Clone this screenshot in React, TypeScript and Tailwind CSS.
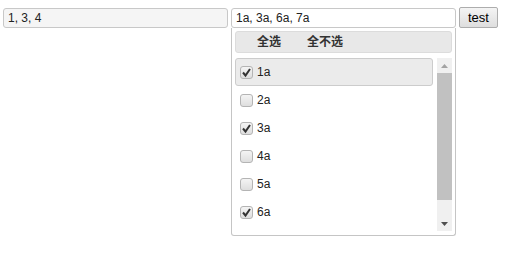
import React from "react";

const items = [
  { label: "1a", checked: true },
  { label: "2a", checked: false },
  { label: "3a", checked: true },
  { label: "4a", checked: false },
  { label: "5a", checked: false },
  { label: "6a", checked: true },
];

function Box({ checked }: { checked: boolean }) {
  return (
    <span className="relative inline-block w-[13px] h-[13px] rounded-[3px] border border-[#b4b4b4] bg-gradient-to-b from-[#f4f4f4] to-[#dedede] shrink-0">
      {checked && (
        <svg viewBox="0 0 13 13" className="absolute left-[-1px] top-[-1px] w-[13px] h-[13px]">
          <path d="M3 6.5 L5.5 9.5 L10 3" fill="none" stroke="#333" strokeWidth="2" />
        </svg>
      )}
    </span>
  );
}

export default function App() {
  return (
    <div
      className="w-[519px] h-[260px] bg-white flex items-start gap-[3px] pt-[7px] pl-[3px] text-[12px] text-[#222]"
      style={{ fontFamily: '"Liberation Sans", Arial, "Noto Sans CJK SC", sans-serif' }}
    >
      <div className="w-[225px] h-[20px] mt-[1px] border border-[#c8c8c8] rounded-[3px] bg-[#f5f5f5] flex items-center px-[4px]">
        1, 3, 4
      </div>
      <div className="flex flex-col w-[225px]">
        <div className="h-[20px] mt-[1px] border border-[#c8c8c8] rounded-[3px] bg-white flex items-center px-[4px]">
          1a, 3a, 6a, 7a
        </div>
        <div className="h-[208px] border border-[#c5c5c5] border-t-0 rounded-b-[3px] pt-[3px] px-[3px] pb-[3px] bg-white flex flex-col">
          <div className="h-[22px] rounded-[3px] bg-[#e8e8e8] border border-[#dcdcdc] flex items-center pl-[21px] gap-[26px] font-bold text-[#333]">
            <span>全选</span>
            <span>全不选</span>
          </div>
          <div className="flex mt-[5px] h-[173px] overflow-hidden">
            <div className="w-[198px] flex flex-col">
              {items.map((it, i) => (
                <div
                  key={it.label}
                  className={
                    "h-[28px] shrink-0 flex items-center gap-[4px] pl-[4px] rounded-[3px] border " +
                    (i === 0 ? "bg-[#ebebeb] border-[#cccccc]" : "border-transparent")
                  }
                >
                  <Box checked={it.checked} />
                  <span>{it.label}</span>
                </div>
              ))}
            </div>
            <div className="ml-[4px] w-[15px] h-[173px] bg-[#f0f0f0] flex flex-col items-center">
              <div className="h-[15px] w-full flex items-center justify-center">
                <svg viewBox="0 0 7 4" className="w-[7px] h-[4px]"><path d="M0 4 L3.5 0 L7 4 Z" fill="#a3a3a3" /></svg>
              </div>
              <div className="w-full h-[127px] bg-[#c1c1c1]" />
              <div className="flex-1" />
              <div className="h-[15px] w-full flex items-center justify-center">
                <svg viewBox="0 0 7 4" className="w-[7px] h-[4px]"><path d="M0 0 L3.5 4 L7 0 Z" fill="#505050" /></svg>
              </div>
            </div>
          </div>
        </div>
      </div>
      <button className="h-[21px] px-[8px] border border-[#adadad] rounded-[2px] bg-gradient-to-b from-[#f4f4f4] to-[#dedede] text-[13px] text-black leading-none">
        test
      </button>
    </div>
  );
}
